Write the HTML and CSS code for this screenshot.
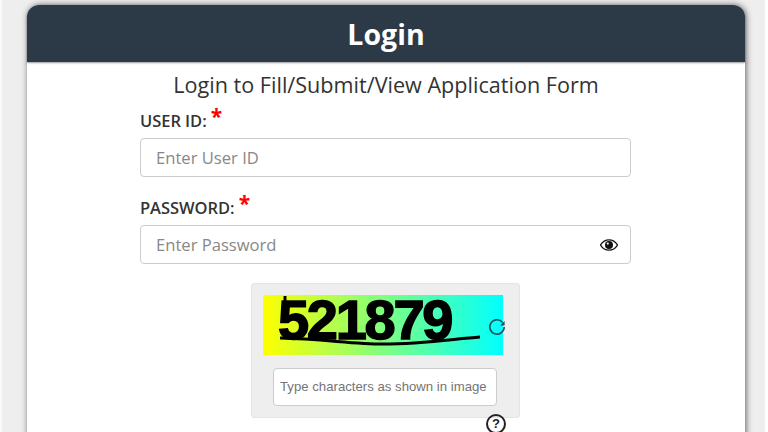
FILE: index.html
```html
<!DOCTYPE html>
<html lang="en">
<head>
    <meta charset="UTF-8">
    <meta name="viewport" content="width=device-width, initial-scale=1.0">
    <title>Login</title>
    <link rel="stylesheet" href="styles.css">
</head>
<body>
    <div class="card">
        <div class="card-header">Login</div>
        <div class="card-body">
            <p class="subtitle">Login to Fill/Submit/View Application Form</p>
            <form class="login-form">
                <label class="field-label">USER ID: <span class="required">*</span></label>
                <div class="input-box">
                    <span class="placeholder">Enter User ID</span>
                </div>

                <label class="field-label second">PASSWORD: <span class="required">*</span></label>
                <div class="input-box">
                    <span class="placeholder">Enter Password</span>
                    <svg class="eye" viewBox="0 0 18 12" width="18" height="12">
                        <path d="M0.5 6C2.6 2.6 5.6 0.8 9 0.8S15.4 2.6 17.5 6C15.4 9.4 12.4 11.2 9 11.2S2.6 9.4 0.5 6Z" fill="none" stroke="#111" stroke-width="1.3"/>
                        <circle cx="9" cy="6" r="4" fill="#111"/>
                        <circle cx="7.8" cy="4.6" r="1.1" fill="#fff"/>
                    </svg>
                </div>

                <div class="captcha-panel">
                    <div class="captcha-row">
                        <div class="captcha-image">
                            <span class="captcha-text">521879</span>
                            <svg class="captcha-line" viewBox="0 0 240 60" width="240" height="60">
                                <path d="M17 43C60 44 90 49 120 49C160 49 190 44 217 42" fill="none" stroke="#000" stroke-width="3"/>
                                <path d="M22 1V10" stroke="#000" stroke-width="3"/>
                            </svg>
                        </div>
                        <svg class="refresh" viewBox="0 0 18 18" width="18" height="18">
                            <path d="M14.6 4.4A7.2 7.2 0 1 0 16.2 9" fill="none" stroke="#1c4f5e" stroke-width="1.6"/>
                            <path d="M16.6 3V7.4H12.2Z" fill="#1c4f5e"/>
                        </svg>
                    </div>
                    <div class="captcha-input">Type characters as shown in image</div>
                </div>
                <div class="help-row">
                    <span class="help">?</span>
                </div>
            </form>
        </div>
    </div>
</body>
</html>
```
FILE: styles.css
```css
* {
    margin: 0;
    padding: 0;
    box-sizing: border-box;
}

html {
    background: #fff;
}

html, body {
    height: 432px;
    overflow: hidden;
}

body {
    width: 765px;
    background: #eee;
    font-family: 'Open Sans', 'Noto Sans', sans-serif;
    color: #333;
    padding: 5px 0 0 25px;
    border-left: 2px solid #fafafa;
}

.card {
    width: 718px;
    height: 460px;
    background: #fff;
    border-radius: 12px 12px 0 0;
    box-shadow: 1px 0 6px rgba(0, 0, 0, 0.6);
}

.card-header {
    height: 57px;
    background: #2c3a48;
    color: #fff;
    border-radius: 12px 12px 0 0;
    font-size: 28.5px;
    font-weight: 700;
    line-height: 58px;
    text-align: center;
    box-shadow: 0 1px 2px rgba(0, 0, 0, 0.4);
}

.subtitle {
    font-size: 21.6px;
    line-height: 30px;
    text-align: center;
    padding-top: 8px;
    height: 43px;
}

.login-form {
    width: 491px;
    margin-left: 113px;
}

.field-label {
    display: block;
    font-size: 16.5px;
    font-weight: 600;
    line-height: 24px;
    height: 33px;
    padding-top: 4px;
    letter-spacing: -0.05px;
}

.field-label.second {
    margin-top: 13px;
    height: 35px;
    padding-top: 6px;
}

.required {
    color: #f00;
    font-size: 21px;
    line-height: 16px;
    font-weight: 700;
    position: relative;
    top: -3px;
}

.input-box {
    height: 39px;
    border: 1px solid #ccc;
    border-radius: 4px;
    padding: 0 12px 0 15px;
    display: flex;
    align-items: center;
    justify-content: space-between;
}

.placeholder {
    font-size: 16.6px;
    color: #888;
}

.captcha-panel {
    width: 269px;
    height: 135px;
    margin: 19px 0 0 111px;
    padding: 11px 0 0 11px;
    background: #eee;
    border: 1px solid #e4e4e4;
    border-radius: 3px;
}

.captcha-row {
    display: flex;
    align-items: center;
}

.captcha-image {
    position: relative;
    flex: none;
    width: 240px;
    height: 60px;
    background: linear-gradient(to right, #ffff00 0%, #00ffff 100%);
}

.captcha-text {
    display: block;
    font-family: 'Liberation Sans', Arial, sans-serif;
    font-size: 56px;
    font-weight: 700;
    line-height: 50px;
    letter-spacing: -2.3px;
    color: #000;
    padding-left: 15px;
    -webkit-text-stroke: 1.5px #000;
}

.captcha-line {
    position: absolute;
    top: 0;
    left: 0;
}

.refresh {
    flex: none;
    margin-left: -15px;
    position: relative;
    top: 2px;
}

.captcha-input {
    width: 224px;
    height: 38px;
    margin: 13px 0 0 10px;
    padding-left: 6px;
    background: #fff;
    border: 1px solid #ccc;
    border-radius: 4px;
    font-family: 'Liberation Sans', Arial, sans-serif;
    font-size: 13.2px;
    line-height: 36px;
    color: #757575;
    white-space: nowrap;
}

.help-row {
    display: flex;
    justify-content: flex-end;
    width: 366px;
}

.help {
    display: flex;
    align-items: center;
    justify-content: center;
    width: 20px;
    height: 20px;
    margin-top: -4px;
    border: 2px solid #222;
    border-radius: 50%;
    font-family: 'Liberation Sans', Arial, sans-serif;
    font-size: 13px;
    font-weight: 700;
    line-height: 12px;
    color: #222;
}
```
